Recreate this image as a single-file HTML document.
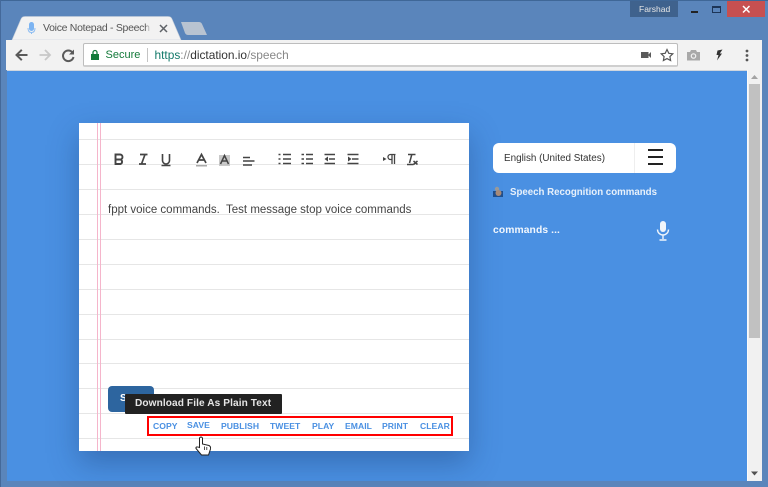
<!DOCTYPE html>
<html><head><meta charset="utf-8">
<style>
html,body{margin:0;padding:0}
body{width:768px;height:487px;overflow:hidden;position:relative;background:#5a85bb;font-family:"Liberation Sans",sans-serif}
.a{position:absolute}
.t{position:absolute;white-space:nowrap}
.l{position:absolute;left:0;width:390px;height:1px;background:#e6e6e6}
.b{position:absolute;font:bold 8.6px "Liberation Sans",sans-serif;color:#4a90e2;white-space:nowrap;letter-spacing:.05px}
svg{position:absolute;overflow:visible}
</style></head><body>
<div class="a" style="left:0;top:0;width:768px;height:1px;background:#3f6797"></div>
<div class="a" style="left:0;top:0;width:1px;height:487px;background:#44699a"></div>
<!-- Tab -->
<svg style="left:0;top:0" width="768" height="72">
<path d="M12 40 L21 19 Q22 16.500 25 16.500 L168 16.500 Q171 16.500 172 19 L181 40 Z" fill="#f2f2f2" stroke="#c3ccd8" stroke-width=".6"/>
<path d="M181 22 L199 22 Q201 22 202 24 L207 35 L188 35 Q186 35 185 33 Z" fill="#b8c3d1"/>
<rect x="29" y="22" width="5" height="9" rx="2.500" fill="#7cb4f2"/>
<path d="M28 28 Q28 32.500 31.500 32.500 Q35 32.500 35 28 M31.500 32.500V34" stroke="#8dbdf2" stroke-width="1" fill="none"/>
<path d="M160 25 L167 32 M167 25 L160 32" stroke="#5f6368" stroke-width="1.500"/>
</svg>
<div class="t" style="left:43px;top:22px;font-size:10.500px;letter-spacing:-.3px;color:#555;width:107px;overflow:hidden">Voice Notepad - Speech</div>
<div class="a" style="left:145px;top:20px;width:6px;height:16px;background:linear-gradient(90deg,rgba(242,242,242,0),#f2f2f2)"></div>
<!-- Toolbar -->
<div class="a" style="left:6px;top:40px;width:756px;height:30px;background:#f2f2f2"></div>
<div class="a" style="left:83px;top:43px;width:593px;height:21px;background:#fff;border:1px solid #bdbdbd;border-bottom:2px solid #cfcfcf;border-radius:2px"></div>
<svg style="left:0;top:0" width="768" height="72">
<path d="M27.500 55H16.500 M21.800 49.800 L16.500 55 L21.800 60.200" stroke="#5a5a5a" stroke-width="2" fill="none"/>
<path d="M50 55H39.500 M45 50 L50 55 L45 60" stroke="#c8c8c8" stroke-width="1.800" fill="none"/>
<path d="M72.500 52.500 A5.300 5.300 0 1 0 73.500 57" stroke="#5a5a5a" stroke-width="2" fill="none"/>
<path d="M74 49.500V54.500H69Z" fill="#5a5a5a"/>
<rect x="91" y="54" width="8" height="6" fill="#137a3a"/>
<path d="M93 54V52.500A2 2 0 0 1 97 52.500V54" stroke="#137a3a" stroke-width="1.300" fill="none"/>
<rect x="147" y="48" width="1" height="14" fill="#c4c4c4"/>
<rect x="641" y="52" width="7.500" height="6" fill="#5a5a5a"/><path d="M648.500 54.500L651 52V58L648.500 55.500Z" fill="#5a5a5a"/>
<path d="M667 49.500 L668.800 53.300 L672.800 53.800 L669.900 56.600 L670.600 60.500 L667 58.600 L663.400 60.500 L664.100 56.600 L661.200 53.800 L665.200 53.300 Z" fill="none" stroke="#555" stroke-width="1.200"/>
<path d="M687 52H690L691 50H696L697 52H700V60.500H687Z" fill="#a9a9a9"/><circle cx="693.500" cy="56" r="2.800" fill="#f2f2f2"/><circle cx="693.500" cy="56" r="1.600" fill="#a9a9a9"/>
<path d="M722.500 49.500 L717.500 50.500 L716.500 55 L718.500 55 L717 60.500 L722 53.500 H719.800 Z" fill="#333"/>
<circle cx="747" cy="51" r="1.400" fill="#555"/><circle cx="747" cy="55.500" r="1.400" fill="#555"/><circle cx="747" cy="60" r="1.400" fill="#555"/>
</svg>
<div class="t" style="left:105.500px;top:48.500px;font-size:11px;color:#137a3a">Secure</div>
<div class="t" style="left:154.500px;top:47.500px;font-size:11.900px;color:#888"><span style="color:#137a6a">https</span><span>://</span><span style="color:#333">dictation.io</span>/speech</div>
<!-- Window controls -->
<div class="a" style="left:630px;top:1px;width:48px;height:16px;background:#3f628d"></div>
<div class="t" style="left:639px;top:4px;font-size:8.500px;color:#e6e6e6">Farshad</div>
<div class="a" style="left:691px;top:11px;width:7px;height:2px;background:#222"></div>
<div class="a" style="left:712px;top:6px;width:7px;height:4px;border:1.500px solid #1d3557;border-top-width:2.500px"></div>
<div class="a" style="left:727px;top:1px;width:38px;height:16px;background:#c75050"></div>
<svg style="left:0;top:0" width="768" height="20"><path d="M743 6 L749.500 12.500 M749.500 6 L743 12.500" stroke="#fff" stroke-width="1.500"/></svg>
<!-- Page -->
<div class="a" style="left:7px;top:70px;width:740px;height:411px;background:#4a90e2"></div>
<div class="a" style="left:7px;top:69.500px;width:740px;height:1px;background:#d0d6de"></div>
<!-- Scrollbar -->
<div class="a" style="left:747px;top:70px;width:15px;height:411px;background:#f1f1f1;box-shadow:inset 1px 0 0 #fafafa"></div>
<div class="a" style="left:749px;top:84px;width:11px;height:254px;background:#c1c1c1"></div>
<svg style="left:0;top:0" width="768" height="487"><path d="M751 79L754.500 75L758 79Z" fill="#a3a3a3"/><path d="M751 471.500H758L754.500 475.500Z" fill="#505050"/></svg>
<!-- Paper -->
<div class="a" style="left:79px;top:123px;width:390px;height:328px;background:#fff;box-shadow:0 12px 28px rgba(20,50,100,.35);overflow:hidden">
<div class="l" style="top:16px"></div><div class="l" style="top:41px"></div><div class="l" style="top:66px"></div><div class="l" style="top:91px"></div><div class="l" style="top:116px"></div><div class="l" style="top:141px"></div><div class="l" style="top:166px"></div><div class="l" style="top:191px"></div><div class="l" style="top:216px"></div><div class="l" style="top:240px"></div><div class="l" style="top:265px"></div><div class="l" style="top:290px"></div><div class="l" style="top:315px"></div>
<div class="a" style="left:18px;top:0;width:1px;height:328px;background:#f5b5cb"></div>
<div class="a" style="left:20.500px;top:0;width:1px;height:328px;background:#f5b5cb"></div>
</div>
<!-- Editor toolbar -->
<svg style="left:0;top:0" width="768" height="487" fill="none" stroke="#444" stroke-width="1.500">
<path d="M115.500 154.500H120A2.500 2.500 0 0 1 120 159.500H115.500ZM115.500 159.500H120.500A2.400 2.400 0 0 1 120.500 164H115.500Z" stroke-width="1.900"/>
<path d="M140 154.500H147.500M139 164H146M145 154.500L141.500 164" stroke-width="1.700"/>
<path d="M162.500 154V160.500A3.500 3.500 0 0 0 169.500 160.500V154M161.500 165.500H170.500" stroke-width="1.600"/>
<path d="M197 163L201.500 154.500L206 163M198.500 160H204.500" stroke-width="1.700"/>
<rect x="196" y="165" width="11" height="1.500" fill="#aaa" stroke="none"/>
<rect x="219" y="155" width="11" height="11" fill="#bbb" stroke="none" opacity=".8"/>
<path d="M220.500 164L224.500 155.500L228.500 164M222 161H227" stroke-width="1.500"/>
<path d="M243 157.500H250M243 161H254.500M243 165H252" stroke-width="1.600"/>
<path d="M283 154.500H291M283 159H291M283 163.500H291M278.500 154.500H280.500M278.500 159H280.500M278.500 163.500H280.500" stroke-width="1.500"/>
<path d="M306 154.500H313M306 159H313M306 163.500H313M301.500 154.500H304M301.500 159H304M301.500 163.500H304" stroke-width="1.500"/>
<path d="M324.500 154.500H335M329 159H335M324.500 163.500H335" stroke-width="1.500"/><path d="M328 156.500V161.500L324.500 159Z" fill="#444" stroke="none"/>
<path d="M347.500 154.500H358.500M352 159H358.500M347.500 163.500H358.500" stroke-width="1.500"/><path d="M348 156.500V161.500L351.500 159Z" fill="#444" stroke="none"/>
<path d="M383 157V161L386.500 159Z" fill="#444" stroke="none"/>
<path d="M392 154.500V164M394.500 154.500V164M395.500 154.500H390.500A2.500 2.500 0 0 0 390.500 159.500H392" stroke-width="1.300"/>
<path d="M408 154.500H415.500M411.800 154.500L409.500 163M407 164.500H413.500" stroke-width="1.500"/>
<path d="M413.500 161L417.500 164.500M417.500 161L413.500 164.500" stroke-width="1.500"/>
</svg>
<div class="t" style="left:108px;top:204px;font:11.500px 'Liberation Sans',sans-serif;color:#444;white-space:pre">fppt voice commands.  Test message stop voice commands</div>
<!-- Language box -->
<div class="a" style="left:493px;top:142.500px;width:183px;height:30px;background:#fff;border-radius:6px"></div>
<div class="a" style="left:634px;top:143px;width:1px;height:30px;background:#eee"></div>
<div class="t" style="left:504px;top:152.500px;font:9.900px 'Liberation Sans',sans-serif;color:#333">English (United States)</div>
<div class="a" style="left:648px;top:149px;width:15px;height:2px;background:#222"></div>
<div class="a" style="left:648px;top:156px;width:15px;height:2px;background:#222"></div>
<div class="a" style="left:648px;top:163px;width:15px;height:2px;background:#222"></div>
<!-- Right text -->
<svg style="left:0;top:0" width="768" height="487">
<rect x="493" y="191" width="10" height="6" fill="#1f4e8c"/><circle cx="497" cy="189" r="2.200" fill="#999"/><circle cx="498.500" cy="193" r="3" fill="#a88a78"/>
<rect x="660" y="221" width="6" height="11" rx="3" fill="#f0f5fb"/>
<path d="M657.500 229.500A5.500 5.500 0 0 0 668.500 229.500M663 235V239M659.500 240H666.500" stroke="#f0f5fb" stroke-width="1.400" fill="none"/>
</svg>
<div class="t" style="left:510px;top:186.500px;font:bold 9.700px 'Liberation Sans',sans-serif;color:#e8f1fb">Speech Recognition commands</div>
<div class="t" style="left:493px;top:225px;font:bold 10.300px 'Liberation Sans',sans-serif;color:#f2f7fd;letter-spacing:.1px">commands ...</div>
<!-- Save button + tooltip -->
<div class="a" style="left:108px;top:386px;width:46px;height:26px;background:#2d659f;border-radius:4px"></div>
<div class="t" style="left:120px;top:393px;font:bold 10px 'Liberation Sans',sans-serif;color:#fff">S</div>
<div class="a" style="left:125px;top:394px;width:157px;height:20px;background:#222;border-radius:1px"></div>
<div class="t" style="left:135px;top:398px;font:bold 10.100px 'Liberation Sans',sans-serif;color:#e6e6e6;letter-spacing:.1px">Download File As Plain Text</div>
<!-- Red box + buttons -->
<div class="a" style="left:147px;top:416px;width:302px;height:16px;border:2px solid #f00;background:#fff"></div>
<div class="b" style="left:153px;top:421px">COPY</div>
<div class="b" style="left:187px;top:420px">SAVE</div>
<div class="b" style="left:221px;top:421px">PUBLISH</div>
<div class="b" style="left:270px;top:421px">TWEET</div>
<div class="b" style="left:312px;top:421px">PLAY</div>
<div class="b" style="left:345px;top:421px">EMAIL</div>
<div class="b" style="left:382px;top:421px">PRINT</div>
<div class="b" style="left:420px;top:421px">CLEAR</div>
<!-- Cursor -->
<svg style="left:0;top:0" width="768" height="487"><path d="M199.500 438Q201 436 202.500 438V444L209 445.500Q211 446.500 210.500 449L208.500 455H201.500L196 448.500Q195.500 446 199.500 447.500Z" fill="#fff" stroke="#222" stroke-width="1"/><path d="M204.500 446.500V450M206.800 447V450" stroke="#222" stroke-width=".8"/></svg>
</body></html>
